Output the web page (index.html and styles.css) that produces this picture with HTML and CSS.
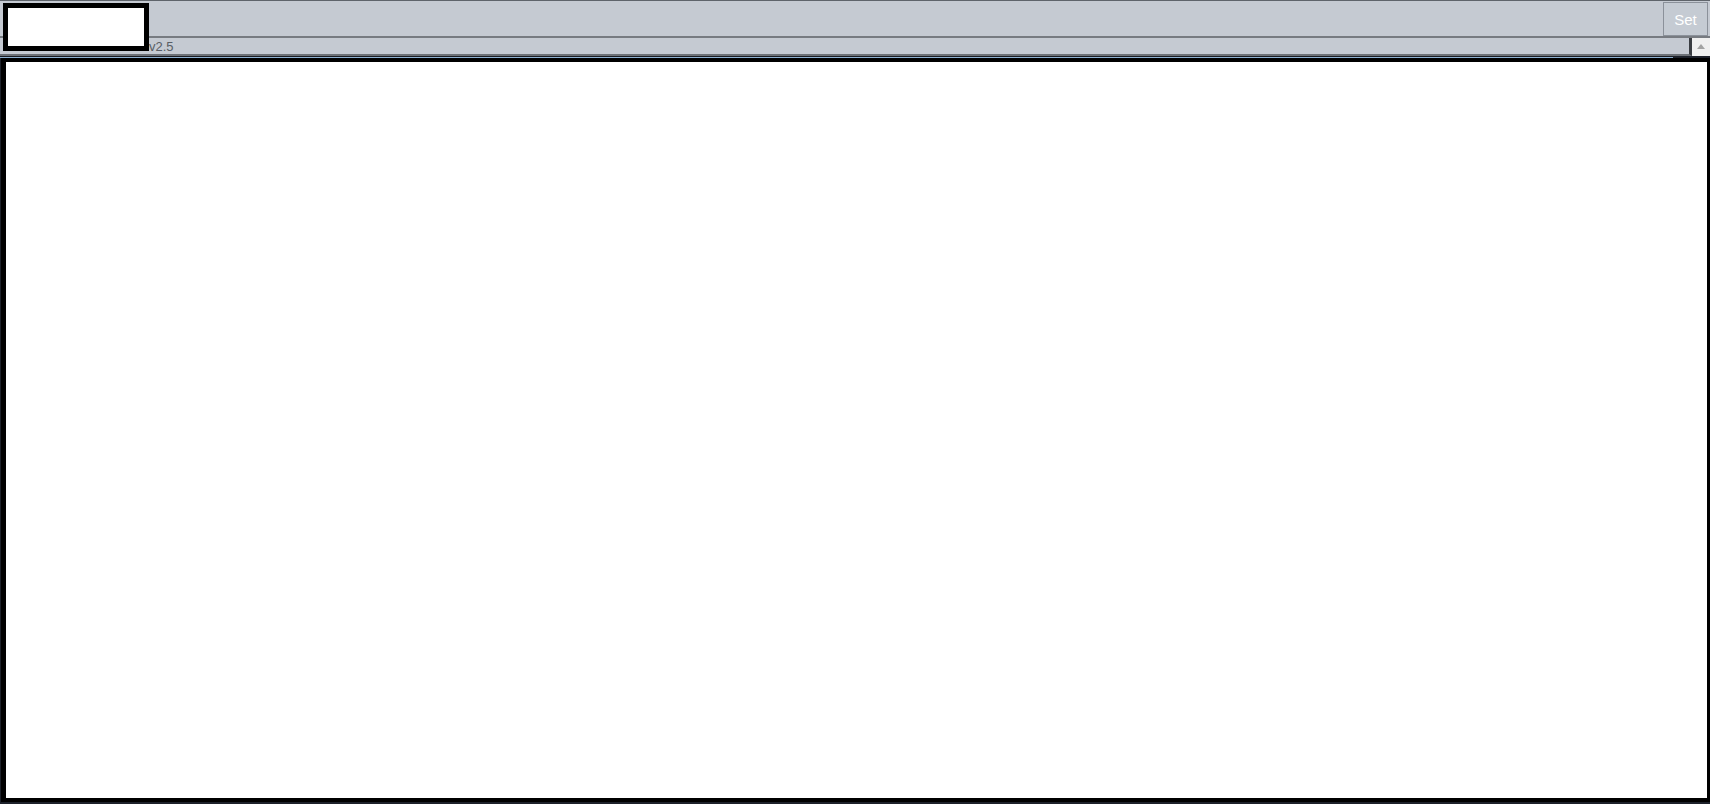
FILE: index.html
```html
<!DOCTYPE html>
<html lang="en">

<head>
  <meta charset="UTF-8">
  <meta name="viewport" content="width=device-width, initial-scale=1.0">
  <title>Viewer v2.5</title>
  <link rel="stylesheet" href="styles.css">
</head>

<body>
  <div class="topbar">
    <div class="spacer"></div>
    <button class="set-button">Set</button>
  </div>
  <div class="infobar">
    <div class="info-strip">
      <span class="version">v2.5</span>
    </div>
    <div class="scroll-col"><span class="arrow"></span></div>
  </div>
  <div class="divider"></div>
  <div class="logo"></div>
  <div class="canvas"></div>
</body>

</html>
```

FILE: styles.css
```css
body {
  margin: 0;
  padding: 0;
  font-family: "Liberation Sans", Arial, sans-serif;
  background-color: #1d212a;
  height: 804px;
  overflow: hidden;
}

.topbar {
  display: flex;
  align-items: flex-start;
  height: 35px;
  background-color: #c5cad2;
  border-top: 1px solid #5f646b;
  border-bottom: 2px solid #777b81;
}

.spacer {
  flex: 1;
}

.set-button {
  margin: 1px 2px 0 0;
  width: 45px;
  height: 34px;
  padding: 0;
  background-color: #c5cbd3;
  border: 1px solid #8b919a;
  color: #fff;
  font-family: "Liberation Sans", Arial, sans-serif;
  font-size: 15px;
}

.infobar {
  display: flex;
  height: 18px;
  background-color: #c5cad2;
}

.info-strip {
  flex: 1;
  border-right: 3px solid #3a3d42;
  border-bottom: 2px solid #6d7177;
  padding: 2px 0 0 149px;
  font-size: 13px;
  line-height: 14px;
  color: #585d64;
}

.scroll-col {
  width: 18px;
  background-color: #f0f0f0;
  display: flex;
  justify-content: center;
  padding-top: 6px;
  box-sizing: border-box;
}

.arrow {
  width: 0;
  height: 0;
  border-left: 4px solid transparent;
  border-right: 4px solid transparent;
  border-bottom: 5px solid #a3a3a3;
}

.divider {
  height: 2px;
  margin-right: 37px;
  background-color: #1a1c22;
  border-bottom: 1px solid #8fb2d3;
  box-sizing: border-box;
}

.logo {
  position: absolute;
  top: 3px;
  left: 3px;
  width: 146px;
  height: 48px;
  box-sizing: border-box;
  border: 5px solid #000;
  background-color: #fff;
}

.canvas {
  margin-left: 1px;
  height: 744px;
  box-sizing: border-box;
  border: 4px solid #000;
  border-left-width: 5px;
  border-right-width: 3px;
  background-color: #fff;
}
```
